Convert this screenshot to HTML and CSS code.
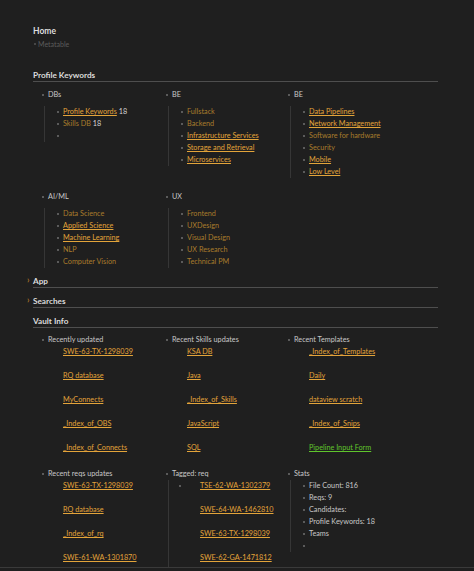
FILE: index.html
```html
<!DOCTYPE html>
<html lang="en">
<head>
    <meta charset="UTF-8">
    <meta name="viewport" content="width=device-width, initial-scale=1.0">
    <title>Home</title>
    <link rel="stylesheet" href="styles.css">
</head>
<body>
<div class="window">
    <div class="page">

        <!-- Title -->
        <h1 class="title">Home</h1>
        <ul class="meta">
            <li>Metatable</li>
        </ul>

        <!-- Profile Keywords -->
        <h2 class="section">Profile Keywords</h2>
        <div class="cols">
            <ul class="group">
                <li>DBs
                    <ul class="sub">
                        <li><a href="#">Profile Keywords</a> <span class="num">18</span></li>
                        <li><span class="dim">Skills DB</span> <span class="num">18</span></li>
                        <li></li>
                    </ul>
                </li>
            </ul>
            <ul class="group">
                <li>BE
                    <ul class="sub">
                        <li><span class="dim">Fullstack</span></li>
                        <li><span class="dim">Backend</span></li>
                        <li><a href="#">Infrastructure Services</a></li>
                        <li><a href="#">Storage and Retrieval</a></li>
                        <li><a href="#">Microservices</a></li>
                    </ul>
                </li>
            </ul>
            <ul class="group">
                <li>BE
                    <ul class="sub">
                        <li><a href="#">Data Pipelines</a></li>
                        <li><a href="#">Network Management</a></li>
                        <li><span class="dim">Software for hardware</span></li>
                        <li><span class="dim">Security</span></li>
                        <li><a href="#">Mobile</a></li>
                        <li><a href="#">Low Level</a></li>
                    </ul>
                </li>
            </ul>
        </div>

        <div class="cols row2">
            <ul class="group">
                <li>AI/ML
                    <ul class="sub">
                        <li><span class="dim">Data Science</span></li>
                        <li><a href="#">Applied Science</a></li>
                        <li><a href="#">Machine Learning</a></li>
                        <li><span class="dim">NLP</span></li>
                        <li><span class="dim">Computer Vision</span></li>
                    </ul>
                </li>
            </ul>
            <ul class="group">
                <li>UX
                    <ul class="sub">
                        <li><span class="dim">Frontend</span></li>
                        <li><span class="dim">UXDesign</span></li>
                        <li><span class="dim">Visual Design</span></li>
                        <li><span class="dim">UX Research</span></li>
                        <li><span class="dim">Technical PM</span></li>
                    </ul>
                </li>
            </ul>
        </div>

        <!-- Collapsed sections -->
        <h2 class="section folded first-fold">App</h2>
        <h2 class="section folded">Searches</h2>

        <!-- Vault Info -->
        <h2 class="section">Vault Info</h2>
        <div class="cols vault">
            <ul class="group">
                <li>Recently updated
                    <div class="links">
                        <a href="#">SWE-63-TX-1298039</a>
                        <a href="#">RQ database</a>
                        <a href="#">MyConnects</a>
                        <a href="#">_Index_of_OBS</a>
                        <a href="#">_Index_of_Connects</a>
                    </div>
                </li>
            </ul>
            <ul class="group">
                <li>Recent Skills updates
                    <div class="links">
                        <a href="#">KSA DB</a>
                        <a href="#">Java</a>
                        <a href="#">_Index_of_Skills</a>
                        <a href="#">JavaScript</a>
                        <a href="#">SQL</a>
                    </div>
                </li>
            </ul>
            <ul class="group">
                <li>Recent Templates
                    <div class="links">
                        <a href="#">_Index_of_Templates</a>
                        <a href="#">Daily</a>
                        <a href="#">dataview scratch</a>
                        <a href="#">_Index_of_Snips</a>
                        <a href="#" class="green">Pipeline Input Form</a>
                    </div>
                </li>
            </ul>
        </div>

        <div class="cols vault">
            <ul class="group">
                <li>Recent reqs updates
                    <div class="links">
                        <a href="#">SWE-63-TX-1298039</a>
                        <a href="#">RQ database</a>
                        <a href="#">_Index_of_rq</a>
                        <a href="#">SWE-61-WA-1301870</a>
                    </div>
                </li>
            </ul>
            <ul class="group">
                <li>Tagged: req
                    <ul class="sub tagged">
                        <li>
                            <div class="links">
                                <a href="#">TSE-62-WA-1302379</a>
                                <a href="#">SWE-64-WA-1462810</a>
                                <a href="#">SWE-63-TX-1298039</a>
                                <a href="#">SWE-62-GA-1471812</a>
                            </div>
                        </li>
                    </ul>
                </li>
            </ul>
            <ul class="group">
                <li>Stats
                    <ul class="sub stats">
                        <li>File Count: 816</li>
                        <li>Reqs: 9</li>
                        <li>Candidates:</li>
                        <li>Profile Keywords: 18</li>
                        <li>Teams</li>
                        <li></li>
                    </ul>
                </li>
            </ul>
        </div>

    </div>
</div>
</body>
</html>
```

FILE: styles.css
```css
/* General */
* {
    box-sizing: border-box;
    margin: 0;
    padding: 0;
}

html, body {
    background-color: #1f1f1f;
}

body {
    font-family: Lato, "Noto Sans", sans-serif;
    font-size: 7.25px;
    line-height: 12px;
    color: #c8c8c8;
}

.window {
    height: 568px;
    overflow: hidden;
    border-bottom: 1px solid #3a3a3a;
}

.page {
    padding: 24px 36px 0 33px;
}

ul {
    list-style: none;
}

a {
    color: #e3a43a;
    text-decoration: underline;
    text-underline-offset: 1px;
}

.dim {
    color: #a97c2c;
}

.num {
    color: #d6d6d6;
}

.green {
    color: #5fc52c;
}

/* Title */
.title {
    font-size: 8.5px;
    line-height: 14px;
    font-weight: 700;
    color: #dedede;
}

.meta li {
    position: relative;
    padding-left: 5px;
    color: #5c5c5c;
    font-size: 7px;
}

.meta li::before,
.group > li::before,
.sub > li::before {
    content: "";
    position: absolute;
    left: 0;
    top: 5px;
    width: 2px;
    height: 2px;
    border-radius: 50%;
    background-color: #707070;
}

.meta li::before {
    left: 1px;
    background-color: #555;
}

/* Section headings */
.section {
    margin-top: 7px;
    font-size: 8.2px;
    line-height: 12px;
    font-weight: 700;
    color: #dcdcdc;
    border-bottom: 1px solid #4e4e4e;
    position: relative;
}

.title + .meta + .section {
    margin-top: 19px;
}

.first-fold {
    margin-top: 7px;
}

.folded::before {
    content: "\203A";
    position: absolute;
    left: -6px;
    top: -1px;
    font-weight: 400;
    color: #c88a2c;
    font-size: 9px;
}

/* Columns */
.cols {
    display: grid;
    grid-template-columns: 124px 122px 1fr;
    margin: 7px 0 0 9px;
}

.row2 {
    margin-top: 13px;
}

.vault {
    margin-top: 6px;
}

.vault + .vault {
    margin-top: 2px;
}

.group > li {
    position: relative;
    padding-left: 6px;
}

.sub {
    margin: 5px 0 0 -4px;
    padding-left: 12px;
    border-left: 1px solid #363636;
}

.sub > li {
    position: relative;
    padding-left: 6px;
    min-height: 12px;
}

/* Vault lists */
.links {
    display: flex;
    flex-direction: column;
    align-items: flex-start;
    padding-left: 15px;
}

.links a {
    line-height: 12px;
    margin-bottom: 12px;
}

.tagged {
    margin-top: 0;
    padding-left: 10px;
}

.tagged > li {
    padding-left: 0;
}

.tagged .links {
    padding-left: 21px;
}

.stats {
    margin-top: 0;
}
```
